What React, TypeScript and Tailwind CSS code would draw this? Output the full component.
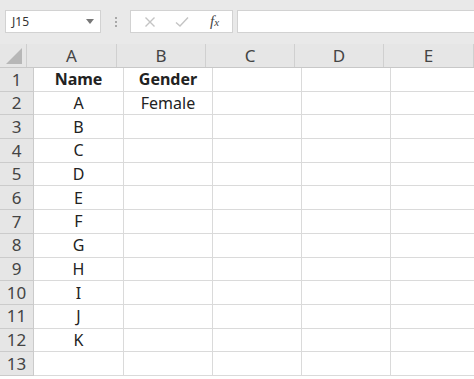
import React from "react";

const cols = ["A", "B", "C", "D", "E"];
const colW = ["w-[90px]", "w-[89px]", "w-[89px]", "w-[89px]", "w-[90px]"];

const data: Record<number, string[]> = {
  1: ["Name", "Gender"],
  2: ["A", "Female"],
  3: ["B"],
  4: ["C"],
  5: ["D"],
  6: ["E"],
  7: ["F"],
  8: ["G"],
  9: ["H"],
  10: ["I"],
  11: ["J"],
  12: ["K"],
  13: [],
};

export default function App() {
  const rows = Array.from({ length: 13 }, (_, i) => i + 1);
  return (
    <div
      className="w-[474px] h-[379px] overflow-hidden bg-white text-[#222]"
      style={{ fontFamily: '"Noto Sans", "Liberation Sans", sans-serif' }}
    >
      {/* formula bar */}
      <div className="h-[44px] bg-[#e9e9e9] flex items-center pl-[5px] pb-[1px]">
        <div className="w-[96px] h-[23px] bg-white border border-[#d2d2d2] flex items-center justify-between pl-[6px] pr-[6px]">
          <span className="text-[12px] text-[#333]">J15</span>
          <svg width="8" height="5" viewBox="0 0 8 5">
            <path d="M0 0 L8 0 L4 5 Z" fill="#777" />
          </svg>
        </div>
        <div className="w-[29px] flex flex-col items-center gap-[2px]">
          <span className="w-[2px] h-[2px] bg-[#a8a8a8]" />
          <span className="w-[2px] h-[2px] bg-[#a8a8a8]" />
          <span className="w-[2px] h-[2px] bg-[#a8a8a8]" />
        </div>
        <div className="w-[103px] h-[23px] bg-white border border-[#d2d2d2] flex items-center">
          <svg width="12" height="12" viewBox="0 0 12 12" className="ml-[13px]">
            <path d="M1.5 1.5 L10.5 10.5 M10.5 1.5 L1.5 10.5" stroke="#c4c4c4" strokeWidth="1.4" />
          </svg>
          <svg width="14" height="12" viewBox="0 0 14 12" className="ml-[19px]">
            <path d="M1 6.5 L5 10 L13 1.5" stroke="#c4c4c4" strokeWidth="1.4" fill="none" />
          </svg>
          <span
            className="ml-[21px] text-[15px] italic text-[#444]"
            style={{ fontFamily: '"Liberation Serif", serif' }}
          >
            f<span className="text-[11px]">x</span>
          </span>
        </div>
        <div className="ml-[4px] flex-1 h-[23px] bg-white border border-[#d2d2d2] border-r-0" />
      </div>

      {/* column headers */}
      <div className="flex h-[24px] bg-[#e6e6e6] border-b border-[#c8c8c8]">
        <div className="w-[34px] h-full border-r border-[#cfcfcf] flex items-end justify-end pr-[4px] pb-[3px]">
          <svg width="16" height="16" viewBox="0 0 16 16">
            <path d="M16 0 L16 16 L0 16 Z" fill="#b7b7b7" />
          </svg>
        </div>
        {cols.map((c, i) => (
          <div
            key={c}
            className={`${colW[i]} shrink-0 h-full border-r border-[#d0d0d0] flex items-center justify-center text-[17px] text-[#444]`}
          >
            {c}
          </div>
        ))}
      </div>

      {/* rows */}
      {rows.map((r) => (
        <div key={r} className="flex h-[23.7px]">
          <div className="w-[34px] shrink-0 h-full bg-[#e6e6e6] border-r border-b border-[#cbcbcb] flex items-center justify-center text-[17px] text-[#444]">
            {r}
          </div>
          {cols.map((c, i) => {
            const v = data[r][i];
            return (
              <div
                key={c}
                className={`${colW[i]} shrink-0 h-full border-r border-b border-[#dadada] flex items-center justify-center text-[16px] ${
                  r === 1 ? "font-bold" : ""
                }`}
              >
                {v}
              </div>
            );
          })}
        </div>
      ))}
    </div>
  );
}
